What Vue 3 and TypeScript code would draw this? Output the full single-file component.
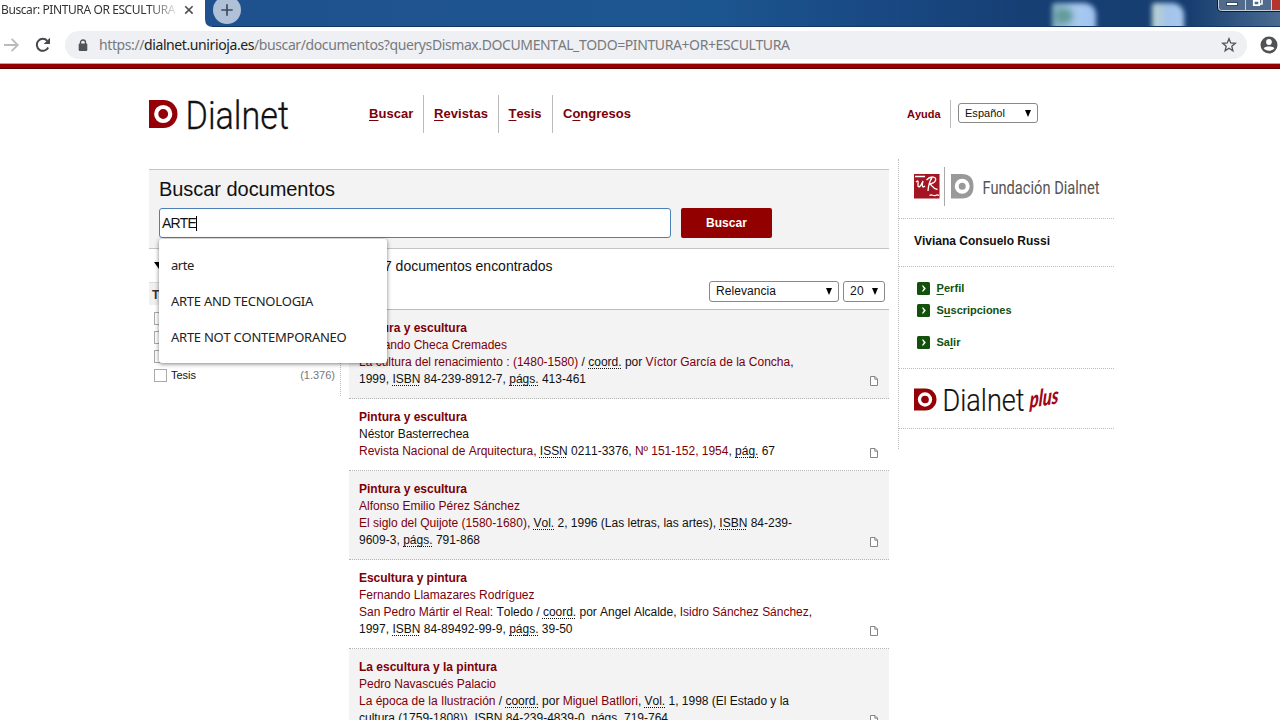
<script setup lang="ts">
type Kind = 'link' | 'text' | 'abbr'
type Segment = [string, Kind]
interface Line { width: number; parts: Segment[] }
interface Result { title: string; titleWidth: number; lines: Line[] }

// Spreads the letters of an element so that its text takes the given width.
const vFit = {
  mounted(el: HTMLElement, binding: { value: number }) {
    const count = (el.textContent ?? '').length
    const natural = el.getBoundingClientRect().width
    el.style.letterSpacing = `${(binding.value - natural) / count}px`
  },
}

const nav = [
  { before: '', key: 'B', after: 'uscar', width: 44.5 },
  { before: '', key: 'R', after: 'evistas', width: 54 },
  { before: '', key: 'T', after: 'esis', width: 33 },
  { before: 'C', key: 'o', after: 'ngresos', width: 68 },
]

const suggestions = [
  { text: 'arte', width: 23 },
  { text: 'ARTE AND TECNOLOGIA', width: 142 },
  { text: 'ARTE NOT CONTEMPORANEO', width: 175.5 },
]

const filters = [
  { name: '', count: '' },
  { name: '', count: '' },
  { name: '', count: '' },
  { name: 'Tesis', count: '(1.376)' },
]

const account = [
  { before: '', key: 'P', after: 'erfil', width: 28, gap: false },
  { before: 'S', key: 'u', after: 'scripciones', width: 75, gap: false },
  { before: 'Sa', key: 'l', after: 'ir', width: 24, gap: true },
]

const results: Result[] = [
  {
    title: 'Pintura y escultura', titleWidth: 108,
    lines: [
      { width: 148, parts: [['Fernando Checa Cremades', 'link']] },
      { width: 434.5, parts: [['La cultura del renacimiento : (1480-1580)', 'link'], [' / ', 'text'], ['coord.', 'abbr'], [' por ', 'text'], ['Víctor García de la Concha', 'link'], [',', 'text']] },
      { width: 227, parts: [['1999, ', 'text'], ['ISBN', 'abbr'], [' 84-239-8912-7, ', 'text'], ['págs.', 'abbr'], [' 413-461', 'text']] },
    ],
  },
  {
    title: 'Pintura y escultura', titleWidth: 108,
    lines: [
      { width: 110, parts: [['Néstor Basterrechea', 'text']] },
      { width: 416, parts: [['Revista Nacional de Arquitectura', 'link'], [', ', 'text'], ['ISSN', 'abbr'], [' 0211-3376, ', 'text'], ['Nº 151-152, 1954', 'link'], [', ', 'text'], ['pág.', 'abbr'], [' 67', 'text']] },
    ],
  },
  {
    title: 'Pintura y escultura', titleWidth: 108,
    lines: [
      { width: 161, parts: [['Alfonso Emilio Pérez Sánchez', 'link']] },
      { width: 433, parts: [['El siglo del Quijote (1580-1680)', 'link'], [', ', 'text'], ['Vol.', 'abbr'], [' 2, 1996 (Las letras, las artes), ', 'text'], ['ISBN', 'abbr'], [' 84-239-', 'text']] },
      { width: 121, parts: [['9609-3, ', 'text'], ['págs.', 'abbr'], [' 791-868', 'text']] },
    ],
  },
  {
    title: 'Escultura y pintura', titleWidth: 108,
    lines: [
      { width: 175.5, parts: [['Fernando Llamazares Rodríguez', 'link']] },
      { width: 453, parts: [['San Pedro Mártir el Real', 'link'], [': Toledo / ', 'text'], ['coord.', 'abbr'], [' por Angel Alcalde, ', 'text'], ['Isidro Sánchez Sánchez', 'link'], [',', 'text']] },
      { width: 213.5, parts: [['1997, ', 'text'], ['ISBN', 'abbr'], [' 84-89492-99-9, ', 'text'], ['págs.', 'abbr'], [' 39-50', 'text']] },
    ],
  },
  {
    title: 'La escultura y la pintura', titleWidth: 138,
    lines: [
      { width: 137, parts: [['Pedro Navascués Palacio', 'link']] },
      { width: 430, parts: [['La época de la Ilustración', 'link'], [' / ', 'text'], ['coord.', 'abbr'], [' por ', 'text'], ['Miguel Batllori', 'link'], [', ', 'text'], ['Vol.', 'abbr'], [' 1, 1998 (El Estado y la', 'text']] },
      { width: 309, parts: [['cultura (1759-1808)), ', 'text'], ['ISBN', 'abbr'], [' 84-239-4839-0, ', 'text'], ['págs.', 'abbr'], [' 719-764', 'text']] },
    ],
  },
]
</script>

<template>
  <div class="screen">
    <div class="strip">
      <div class="tab">
        <span class="tab-title"><span v-fit="174" class="fit">Buscar: PINTURA OR ESCULTURA</span></span>
        <svg class="tab-close" width="10" height="10" viewBox="0 0 10 10"><path d="M1.2 1.2 8.6 8.6M8.6 1.2 1.2 8.6" stroke="#4c4f54" stroke-width="1.6" /></svg>
      </div>
      <svg class="tab-curve" width="8" height="8" viewBox="0 0 8 8"><path d="M0 0Q0 8 8 8H0Z" fill="#fff" /></svg>
      <div class="new-tab">
        <svg width="12" height="12" viewBox="0 0 12 12"><path d="M6 0.3V11.7M0.3 6H11.7" stroke="#3d4a5c" stroke-width="1.7" /></svg>
      </div>
      <div class="desk-icon desk-sheet"><i></i></div>
      <div class="desk-icon desk-doc"></div>
      <svg class="win" width="64" height="13" viewBox="0 0 64 13">
        <path d="M1.5-2V8Q1.5 11.5 5 11.5H66V-2Z" fill="#516b8d" stroke="#0f1c33" />
        <path d="M56-2V10.5H66V-2Z" fill="#b5342b" />
        <path d="M2.500-2V7.500Q2.500 10.500 5.500 10.500H64" fill="none" stroke="#c6d0dc" />
        <path d="M29.500 0V10.500M55.500 0V10.500" stroke="#c6d0dc" />
        <rect x="10.500" y="2.500" width="11" height="3" fill="#fff" stroke="#394a63" />
        <path d="M42.500-1H46V4H44" fill="none" stroke="#fff" stroke-width="1.500" />
        <path d="M37.800-1V5.200H43.200V0.800H37.800" fill="none" stroke="#fff" stroke-width="1.800" />
      </svg>
    </div>

    <div class="toolbar">
      <svg class="forward" width="16" height="16" viewBox="0 0 16 16"><path d="M0 8H13.500M7.600 1.800 13.800 8 7.600 14.200" fill="none" stroke="#b9bbbe" stroke-width="1.800" /></svg>
      <svg class="reload" width="16" height="16" viewBox="0 0 16 16"><path d="M13.200 10.500A6 6 0 1 1 12.300 3.800" fill="none" stroke="#46494d" stroke-width="2" /><path d="M15 0.700V7H8.700Z" fill="#46494d" /></svg>
      <div class="omnibox">
        <svg width="10" height="13" viewBox="0 0 10 13"><path d="M2.500 5.500V3.500A2.500 2.500 0 0 1 7.500 3.500V5.500" fill="none" stroke="#505357" stroke-width="1.400" /><rect x="0.700" y="4.500" width="8.600" height="7.500" rx="1" fill="#505357" /></svg>
        <span class="url"><span v-fit="690.500" class="fit">https://<b>dialnet.unirioja.es</b>/buscar/documentos?querysDismax.DOCUMENTAL_TODO=PINTURA+OR+ESCULTURA</span></span>
        <svg class="star" width="16" height="16" viewBox="0 0 16 16"><path d="M8 1.700 9.700 6 14.300 6.300 10.800 9.200 11.900 13.800 8 11.300 4.100 13.800 5.200 9.200 1.700 6.300 6.300 6Z" fill="none" stroke="#505357" stroke-width="1.300" /></svg>
      </div>
      <svg class="person" width="18" height="18" viewBox="0 0 18 18"><circle cx="9" cy="9" r="8.500" fill="#505256" /><circle cx="9" cy="6" r="2.900" fill="#fff" /><path d="M3.700 12.300C5 10 13 10 14.300 12.300C12.500 15.500 5.500 15.500 3.700 12.300Z" fill="#fff" /></svg>
    </div>
    <div class="redline"></div>

    <div class="page">
      <div class="main">
        <header class="header">
          <svg class="logo" width="144" height="40" viewBox="0 0 144 40">
            <path d="M0 5H14.500A14 14 0 0 1 14.500 33H0Z" fill="#930008" />
            <circle cx="14.200" cy="19" r="7" fill="none" stroke="#fff" stroke-width="4.200" />
            <text x="36.500" y="34" font-family="Roboto, sans-serif" font-weight="300" font-size="39.500" textLength="103.500" lengthAdjust="spacingAndGlyphs" fill="#111" stroke="#111" stroke-width="0.300">Dialnet</text>
          </svg>
          <nav class="nav">
            <a v-for="item in nav" :key="item.after"><span v-fit="item.width" class="fit">{{ item.before }}<u>{{ item.key }}</u>{{ item.after }}</span></a>
          </nav>
          <a class="help"><span v-fit="33.500" class="fit">Ayuda</span></a>
          <div class="select lang"><span v-fit="40" class="fit">Español</span><i class="caret"></i></div>
        </header>

        <section class="search">
          <h1><span v-fit="176" class="fit">Buscar documentos</span></h1>
          <div class="search-row">
            <div class="field"><span v-fit="34" class="fit">ARTE</span><i class="cursor"></i></div>
            <div class="button"><span v-fit="41" class="fit">Buscar</span></div>
            <ul class="suggest">
              <li v-for="s in suggestions" :key="s.text"><span v-fit="s.width" class="fit">{{ s.text }}</span></li>
            </ul>
          </div>
        </section>

        <div class="columns">
          <aside class="filters">
            <div class="filters-top"><i class="caret big"></i></div>
            <div class="filters-head">T</div>
            <ul>
              <li v-for="(f, i) in filters" :key="i"><i class="box"></i><span>{{ f.name }}</span><em>{{ f.count }}</em></li>
            </ul>
          </aside>
          <section class="results">
            <div class="found"><span v-fit="203.500" class="fit">21.167 documentos encontrados</span></div>
            <div class="sorting">
              <div class="select order"><span v-fit="60" class="fit">Relevancia</span><i class="caret"></i></div>
              <div class="select amount"><span v-fit="14" class="fit">20</span><i class="caret"></i></div>
            </div>
            <ol class="list">
              <li v-for="(r, i) in results" :key="i">
                <div class="text">
                  <div class="line"><strong v-fit="r.titleWidth" class="fit">{{ r.title }}</strong></div>
                  <div v-for="(line, j) in r.lines" :key="j" class="line"><span v-fit="line.width" class="fit"><span v-for="(p, k) in line.parts" :key="k" :class="p[1]">{{ p[0] }}</span></span></div>
                </div>
                <svg class="sheet" width="8" height="10" viewBox="0 0 8 10"><path d="M0.500 0.500H5L7.500 3V9.500H0.500ZM4.800 0.500V3.200H7.500" fill="#fff" stroke="#858585" /></svg>
              </li>
            </ol>
          </section>
        </div>
      </div>

      <aside class="side">
        <div class="block foundation">
          <svg width="190" height="42" viewBox="0 0 190 42">
            <rect x="0" y="8" width="25.500" height="24.500" fill="#a41522" />
            <path d="M1 10.500H11M2 16C4 14 4.500 15 4 18C3.500 22 6 22 8 17L9 15C7.500 20 8.500 22.500 11 20M14 25C14.500 19 15.500 15 18 12M12.500 14C17 9 23 11 21.500 14.500C20.500 17 17 18 15.500 18C17.500 18 18 22.500 23.500 23.500M15.500 29.500C18 27.500 19 30.500 21.500 29.500C23 28.500 24 28.800 25 29.500" fill="none" stroke="#fff" stroke-width="1.300" />
            <path d="M30.500 1V40" stroke="#aaa" />
            <path d="M37 8H47.500Q59.500 8 59.500 20.300Q59.500 32.500 47.500 32.500H37Z" fill="#999" />
            <circle cx="48.200" cy="20.300" r="5.500" fill="none" stroke="#fff" stroke-width="4" />
            <text x="68.500" y="27.500" font-family="Roboto, sans-serif" font-weight="400" font-size="18" textLength="117" lengthAdjust="spacingAndGlyphs" fill="#555">Fundación Dialnet</text>
          </svg>
        </div>
        <div class="block user"><span v-fit="136" class="fit">Viviana Consuelo Russi</span></div>
        <div class="block account">
          <a v-for="a in account" :key="a.after" :class="{ gap: a.gap }">
            <svg width="13" height="13" viewBox="0 0 13 13"><rect width="13" height="13" rx="1.500" fill="#12500c" /><path d="M4.800 3.500H6.300L8.800 6.500 6.300 9.600H4.800L6.800 6.500Z" fill="#fff" /></svg>
            <span v-fit="a.width" class="fit">{{ a.before }}<u>{{ a.key }}</u>{{ a.after }}</span>
          </a>
        </div>
        <div class="block plus">
          <svg width="150" height="40" viewBox="0 0 150 40">
            <path d="M0 8.500H11.500A11 11 0 0 1 11.500 30.500H0Z" fill="#930008" />
            <circle cx="11" cy="19.500" r="5.500" fill="none" stroke="#fff" stroke-width="3.300" />
            <text x="28.500" y="30.700" font-family="Roboto, sans-serif" font-weight="300" font-size="31" textLength="82" lengthAdjust="spacingAndGlyphs" fill="#111" stroke="#111" stroke-width="0.200">Dialnet</text>
            <text x="0" y="0" transform="translate(115.500 28) rotate(-9) skewX(-12)" font-family="Lato, sans-serif" font-style="italic" font-weight="900" font-size="23" textLength="29" lengthAdjust="spacingAndGlyphs" fill="#a00814">plus</text>
          </svg>
        </div>
      </aside>
    </div>
  </div>
</template>

<style>
html, body { margin: 0; overflow: hidden; background: #fff; }
</style>

<style scoped>
.screen { width: 1280px; height: 720px; overflow: hidden; background: #fff; color: #111; font: 12px/17px "Liberation Sans", Arial, sans-serif; }
.fit { display: inline-block; white-space: pre; font-kerning: none; }
ul, ol { list-style: none; margin: 0; padding: 0; }
svg { display: block; flex: none; }
u { text-decoration: underline; text-underline-offset: 2px; text-decoration-thickness: 1px; }

.strip { position: relative; display: flex; height: 27px; overflow: hidden; box-sizing: border-box; background: linear-gradient(90deg, #1e4f8c 0, #1e5490 35%, #1c5690 55%, #194984 68%, #163f74 80%, #173e70 93%, #4a6b91 100%); }
.strip::after { content: ""; position: absolute; left: 212px; right: 0; bottom: 0; height: 1px; background: #123764; }
.tab { display: flex; align-items: flex-start; width: 205px; height: 27px; background: #fff; }
.tab-title { width: 175px; height: 20px; margin-left: 1px; overflow: hidden; font: 12px/20px "Noto Sans", sans-serif; color: #333; -webkit-mask-image: linear-gradient(90deg, #000 148px, rgba(0, 0, 0, .15) 174px); mask-image: linear-gradient(90deg, #000 148px, rgba(0, 0, 0, .15) 174px); }
.tab-close { margin: 5px 0 0 8px; }
.tab-curve { align-self: flex-end; }
.new-tab { display: flex; align-items: center; justify-content: center; width: 28px; height: 28px; margin-top: -4px; border-radius: 50%; background: #b0c0d6; }
.desk-icon { position: absolute; top: 3px; height: 30px; filter: blur(2.5px); border-radius: 3px 12px 0 0; }
.desk-sheet { left: 1052px; width: 44px; background: linear-gradient(90deg, #7fabb8, #a9c9ef 55%, #9fc3f0); }
.desk-sheet i { position: absolute; left: 3px; top: 6px; width: 18px; height: 14px; background: #5f9a98; border-radius: 50%; filter: blur(2px); }
.desk-doc { left: 1152px; width: 32px; background: linear-gradient(90deg, #bcd3cf, #a3c3ea 50%, #a9c9f0); }
.win { position: absolute; right: 0; top: 0; }

.toolbar { display: flex; align-items: center; height: 36px; box-sizing: border-box; background: #fff; }
.forward { margin-left: 4px; }
.reload { margin-left: 15px; }
.omnibox { display: flex; align-items: center; width: 1182px; height: 28px; margin-left: 14px; padding: 0 10px 0 13px; box-sizing: border-box; border-radius: 14px; background: #eff0f3; }
.url { flex: 1; margin-left: 11px; font: 14px/28px "Noto Sans", sans-serif; color: #777a7e; }
.url b { font-weight: 400; color: #222; }
.person { margin-left: 13px; }
.redline { height: 6px; box-sizing: border-box; border-top: 1px solid #b9a9a9; border-bottom: 1px solid #5c0000; background: #960000; }

.page { display: flex; align-items: flex-start; height: 651px; padding-left: 149px; }
.main { width: 740px; flex: none; }
.header { display: flex; width: 900px; height: 100px; }
.logo { margin-top: 26px; }
.nav { display: flex; flex: none; margin: 26px 0 0 66px; width: 548px; height: 38px; }
.nav a { padding: 0 10px; height: 38px; line-height: 37px; font-size: 13px; font-weight: 700; color: #7b0009; border-left: 1px solid #bbb; flex: none; }
.nav a:first-child { border-left: 0; padding-right: 9.5px; }
.nav a:nth-child(3) { padding-left: 9.5px; padding-right: 10.5px; }
.help { box-sizing: border-box; width: 44px; margin-top: 31px; height: 28px; line-height: 29px; font-size: 11px; font-weight: 700; color: #7b0009; border-right: 1px solid #bbb; }
.select { display: flex; align-items: center; justify-content: space-between; box-sizing: border-box; flex: none; border: 1px solid #888; border-radius: 3px; background: #fff; padding: 0 6px; }
.caret { width: 0; height: 0; border: solid transparent; border-width: 7px 3.5px 0; border-top-color: #000; }
.lang { width: 80px; height: 20px; margin: 34px 0 0 7px; font-size: 11px; }

.search { height: 80px; box-sizing: border-box; padding: 0 10px; background: #f3f3f3; border: solid #c4c4c4; border-width: 1px 0; }
.search h1 { margin: 0; height: 38px; font-size: 20px; font-weight: 400; line-height: 38px; }
.search-row { position: relative; display: flex; gap: 10px; }
.field { display: flex; align-items: center; width: 512px; height: 30px; box-sizing: border-box; border: 1px solid #4b81b8; border-radius: 3px; padding-left: 2px; background: #fff; font-size: 14px; }
.cursor { width: 1px; height: 15px; background: #000; }
.button { display: flex; align-items: center; justify-content: center; width: 91px; height: 30px; border-radius: 2px; background: #930000; color: #fff; font-size: 12px; font-weight: 700; }
.suggest { position: absolute; z-index: 2; top: 31px; left: 0; width: 228px; height: 124px; padding-top: 8px; box-sizing: border-box; background: #fff; border-radius: 3px; box-shadow: 0 1px 4px rgba(0, 0, 0, .5); }
.suggest li { height: 36px; padding-left: 12px; font: 13px/36px "Noto Sans", sans-serif; color: #222; }

.columns { display: flex; align-items: flex-start; }
.filters { width: 192px; height: 147px; margin-right: 8px; box-sizing: border-box; border-right: 1px dotted #bbb; flex: none; overflow: hidden; font-size: 11px; }
.filters-top { display: flex; align-items: center; height: 33px; padding-left: 5px; }
.caret.big { border-width: 7px 5px 0; }
.filters-head { height: 22px; padding-left: 3px; line-height: 24px; font-size: 12px; font-weight: 700; color: #333; background: #f0f0f0; border-top: 1px solid #ddd; }
.filters ul { padding: 4px 5px 0 5px; }
.filters li { display: flex; align-items: center; height: 19px; }
.box { width: 11px; height: 11px; margin-right: 4px; border: 1px solid #aaa; background: #fff; }
.filters em { margin-left: auto; font-style: normal; color: #777; }

.results { width: 540px; }
.found { height: 32px; line-height: 34px; font-size: 14px; }
.sorting { display: flex; justify-content: flex-end; gap: 4px; height: 28px; padding-right: 4px; }
.order { width: 130px; height: 21px; line-height: 21px; }
.amount { width: 42px; height: 21px; line-height: 21px; }
.list { border-top: 1px solid #bbb; }
.list li { display: flex; align-items: flex-end; justify-content: space-between; padding: 10px 11px 10px 10px; border-bottom: 1px dotted #b5b5b5; }
.list li:nth-child(odd) { background: #f3f3f3; }
.line { height: 17px; white-space: nowrap; }
.line strong, .link { color: #7b0009; }
.abbr { text-decoration: underline dotted 1px; text-underline-offset: 2px; text-decoration-skip-ink: none; }
.sheet { margin-bottom: 2px; }

.side { width: 216px; height: 290px; margin: 90px 0 0 9px; box-sizing: border-box; border-left: 1px dotted #bbb; flex: none; }
.block { box-sizing: border-box; padding-left: 15px; border-bottom: 1px dotted #bbb; }
.foundation { height: 60px; padding-top: 7px; }
.user { height: 48px; line-height: 45px; font-weight: 700; }
.account { height: 102px; padding: 10px 0 0 18px; }
.account a { display: flex; align-items: center; height: 22px; gap: 6.5px; font-size: 11px; font-weight: 700; color: #12500c; }
.account a.gap { margin-top: 10px; }
.plus { height: 60px; padding-top: 11px; }
</style>
